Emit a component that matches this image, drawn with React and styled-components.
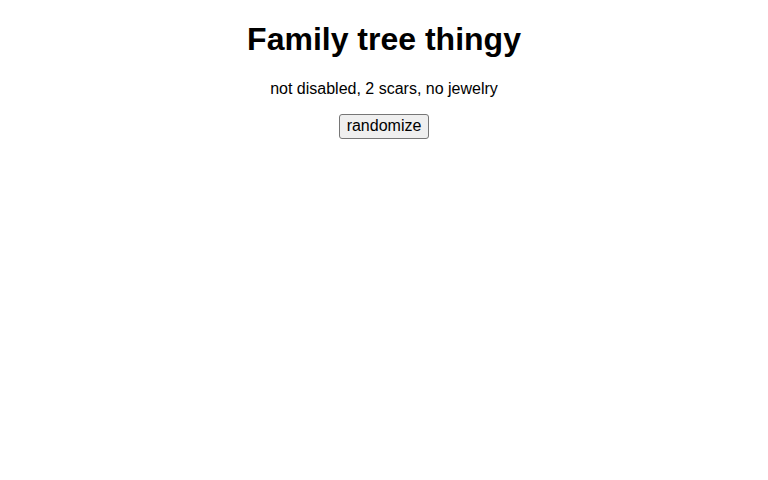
import React, { useState } from "react";
import styled, { createGlobalStyle } from "styled-components";

const GlobalStyle = createGlobalStyle`
  body {
    margin: 0;
    background: #fff;
    color: #000;
    font-family: "Liberation Sans", Arial, sans-serif;
  }
`;

const Page = styled.div`
  text-align: center;
  padding: 0 8px;
`;

const Title = styled.h1`
  font-size: 32px;
  font-weight: bold;
  margin: 21.44px 0;
`;

const Traits = styled.p`
  font-size: 16px;
  margin: 16px 0;
`;

const RandomButton = styled.button`
  font-family: "Liberation Sans", Arial, sans-serif;
  font-size: 16px;
  color: #000;
  background: #efefef;
  border: 1px solid #767676;
  border-radius: 3px;
  padding: 1px 7px;
  height: 25px;
  cursor: pointer;
`;

const scarOptions = [0, 1, 2, 3];

export default function App() {
  const [traits, setTraits] = useState({
    disabled: false,
    scars: 2,
    jewelry: false,
  });

  const randomize = () => {
    setTraits({
      disabled: Math.random() < 0.5,
      scars: scarOptions[Math.floor(Math.random() * scarOptions.length)],
      jewelry: Math.random() < 0.5,
    });
  };

  return (
    <Page>
      <GlobalStyle />
      <Title>Family tree thingy</Title>
      <Traits>
        {traits.disabled ? "disabled" : "not disabled"}, {traits.scars} scars,{" "}
        {traits.jewelry ? "jewelry" : "no jewelry"}
      </Traits>
      <RandomButton onClick={randomize}>randomize</RandomButton>
    </Page>
  );
}
